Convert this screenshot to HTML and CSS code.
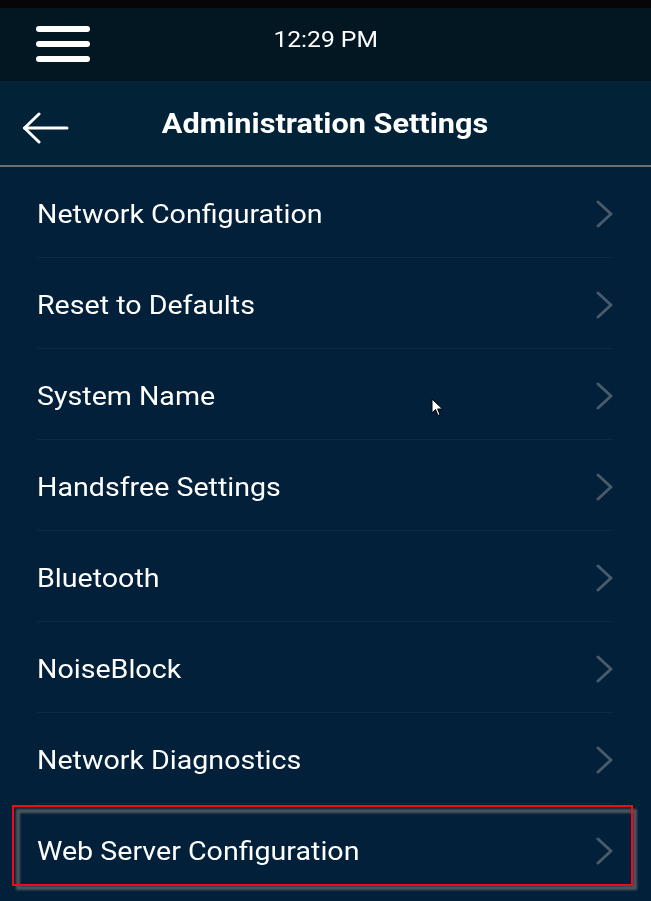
FILE: index.html
```html
<!DOCTYPE html>
<html lang="en">
<head>
<meta charset="utf-8">
<title>Administration Settings</title>
<link rel="stylesheet" href="styles.css">
</head>
<body>
<div class="screen">
  <div class="topstrip"></div>
  <header class="statusbar">
    <svg class="hamburger" width="54" height="39" viewBox="0 0 54 39">
      <g stroke="#ffffff" stroke-width="6" stroke-linecap="round">
        <line x1="3" y1="3" x2="51" y2="3"/>
        <line x1="3" y1="18" x2="51" y2="18"/>
        <line x1="3" y1="33" x2="51" y2="33"/>
      </g>
    </svg>
    <div class="time">12:29 PM</div>
  </header>
  <div class="titlebar">
    <svg class="back" width="48" height="32" viewBox="0 0 48 32">
      <g stroke="#ffffff" stroke-width="3" fill="none" stroke-linecap="round" stroke-linejoin="round">
        <line x1="2.5" y1="16" x2="45" y2="16"/>
        <polyline points="17,2 2.5,16 17,30"/>
      </g>
    </svg>
    <h1 class="title">Administration Settings</h1>
  </div>
  <ul class="list">
    <li class="row"><span class="label">Network Configuration</span><svg class="chev" width="18" height="28" viewBox="0 0 18 28"><polyline points="2,2 15,14 2,26"/></svg></li>
    <li class="row"><span class="label">Reset to Defaults</span><svg class="chev" width="18" height="28" viewBox="0 0 18 28"><polyline points="2,2 15,14 2,26"/></svg></li>
    <li class="row"><span class="label">System Name</span><svg class="chev" width="18" height="28" viewBox="0 0 18 28"><polyline points="2,2 15,14 2,26"/></svg></li>
    <li class="row"><span class="label">Handsfree Settings</span><svg class="chev" width="18" height="28" viewBox="0 0 18 28"><polyline points="2,2 15,14 2,26"/></svg></li>
    <li class="row"><span class="label">Bluetooth</span><svg class="chev" width="18" height="28" viewBox="0 0 18 28"><polyline points="2,2 15,14 2,26"/></svg></li>
    <li class="row"><span class="label">NoiseBlock</span><svg class="chev" width="18" height="28" viewBox="0 0 18 28"><polyline points="2,2 15,14 2,26"/></svg></li>
    <li class="row"><span class="label">Network Diagnostics</span><svg class="chev" width="18" height="28" viewBox="0 0 18 28"><polyline points="2,2 15,14 2,26"/></svg></li>
    <li class="row highlight"><span class="label">Web Server Configuration</span><svg class="chev" width="18" height="28" viewBox="0 0 18 28"><polyline points="2,2 15,14 2,26"/></svg></li>
  </ul>
  <svg class="cursor" width="13" height="20" viewBox="0 0 13 20">
    <path d="M1 1 L1 15 L4.5 11.5 L7 17.5 L9 16.6 L6.6 11 L11.5 11 Z" fill="#ffffff" stroke="#000000" stroke-width="1" stroke-linejoin="miter"/>
  </svg>
</div>
</body>
</html>
```

FILE: styles.css
```css
* { box-sizing: border-box; }
html, body { margin: 0; padding: 0; }
body {
  background: #02203a;
  font-family: Roboto, "Liberation Sans", Arial, sans-serif;
  color: #ffffff;
}
.screen {
  position: relative;
  width: 651px;
  height: 901px;
  background: #02203a;
  overflow: hidden;
}
.topstrip {
  height: 8px;
  background: #060606;
}
.statusbar {
  position: relative;
  height: 73px;
  background: #021722;
  display: flex;
  align-items: center;
  justify-content: center;
}
.hamburger {
  position: absolute;
  left: 36px;
  top: 18px;
}
.time {
  font-size: 22px;
  transform: scaleX(1.12);
  margin-top: -10px;
}
.titlebar {
  position: relative;
  height: 86px;
  background: #022238;
  border-bottom: 2px solid #6e6e6e;
  display: flex;
  align-items: center;
  justify-content: center;
}
.back {
  position: absolute;
  left: 22px;
  top: 31px;
}
.title {
  margin: 0;
  font-size: 28px;
  font-weight: bold;
  transform: scaleX(1.095);
  padding-top: 1px;
}
.list {
  list-style: none;
  margin: 0;
  padding: 0;
}
.row {
  position: relative;
  height: 91px;
  margin: 0 37px 0 37px;
  display: flex;
  align-items: center;
  justify-content: space-between;
  border-bottom: 1px solid #0b2b40;
  font-size: 26px;
}
.label {
  padding-top: 3px;
  transform: scaleX(1.1);
  transform-origin: left center;
}
.chev {
  fill: none;
  stroke: #485b6b;
  stroke-width: 3;
  stroke-linecap: round;
  stroke-linejoin: round;
  margin-top: 3px;
}
.highlight { border-bottom: none; }
.highlight::before {
  content: "";
  position: absolute;
  left: -21px;
  right: -23px;
  top: 5px;
  bottom: 5px;
  border: 4px solid rgba(105,105,105,0.75);
  filter: blur(0.8px);
  pointer-events: none;
}
.highlight::after {
  content: "";
  position: absolute;
  left: -25px;
  right: -19px;
  top: 1px;
  bottom: 9px;
  border: 2px solid #ee0d14;
  pointer-events: none;
}
.cursor {
  position: absolute;
  left: 431px;
  top: 398px;
}
```
